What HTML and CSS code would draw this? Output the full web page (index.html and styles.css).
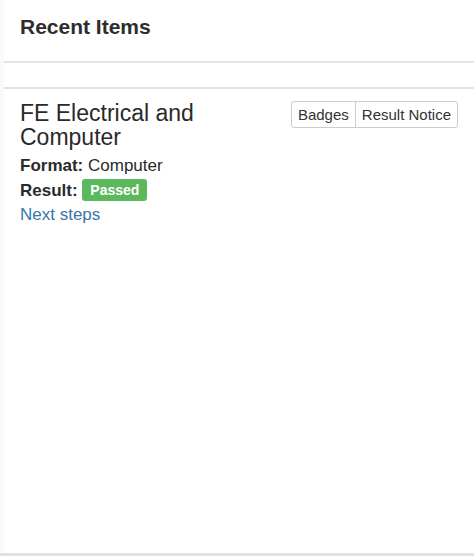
FILE: index.html
```html
<!DOCTYPE html>
<html>
<head>
<meta charset="utf-8">
<link rel="stylesheet" href="styles.css">
</head>
<body>
<div class="page">
  <div class="panel">
    <div class="panel-heading">
      <h2 class="panel-title">Recent Items</h2>
    </div>
    <div class="spacer"></div>
    <div class="item">
      <div class="item-top">
        <h3 class="item-title">FE Electrical and Computer</h3>
        <div class="btn-group">
          <span class="btn">Badges</span>
          <span class="btn">Result Notice</span>
        </div>
      </div>
      <div class="row first"><b>Format:</b> Computer</div>
      <div class="row"><b>Result:</b> <span class="badge">Passed</span></div>
      <a class="link" href="#">Next steps</a>
    </div>
  </div>
</div>
</body>
</html>
```
FILE: styles.css
```css
html, body {
  margin: 0;
  padding: 0;
  height: 100%;
}
body {
  font-family: "Liberation Sans", Arial, sans-serif;
  color: #333;
  background: #dde3e8;
}
.page {
  height: 553px;
  background: #fff;
  border-left: 4px solid #fafafa;
  box-sizing: border-box;
}
.panel-heading {
  height: 63px;
  border-bottom: 2px solid #e3e3e3;
  padding: 0 16px;
  box-sizing: border-box;
}
.panel-title {
  margin: 0;
  padding-top: 15px;
  font-size: 21px;
  line-height: 24px;
  font-weight: bold;
  color: #2d2d2d;
}
.spacer {
  height: 24px;
  border-bottom: 2px solid #e3e3e3;
}
.item {
  padding: 12px 16px 0 16px;
}
.item-top {
  display: flex;
  justify-content: space-between;
  align-items: flex-start;
}
.item-title {
  margin: 0;
  font-size: 23px;
  line-height: 24px;
  font-weight: normal;
  color: #2a2a2a;
  width: 240px;
}
.btn-group {
  display: flex;
  margin-top: 0;
}
.btn {
  font-size: 15px;
  line-height: 25px;
  padding: 0 6px;
  border: 1px solid #ccc;
  color: #333;
  background: #fff;
}
.btn:first-child {
  border-radius: 3px 0 0 3px;
}
.btn + .btn {
  margin-left: -1px;
  border-radius: 0 3px 3px 0;
}
.row {
  font-size: 17px;
  line-height: 25px;
  color: #2a2a2a;
}
.row.first {
  margin-top: 4px;
}
.badge {
  display: inline-block;
  background: #5cb85c;
  color: #fff;
  font-weight: bold;
  font-size: 14px;
  line-height: 22px;
  padding: 0 8px;
  border-radius: 3px;
  vertical-align: 1px;
}
.link {
  display: block;
  margin-top: 1px;
  font-size: 17px;
  line-height: 22px;
  color: #3a75a8;
  text-decoration: none;
}
```
